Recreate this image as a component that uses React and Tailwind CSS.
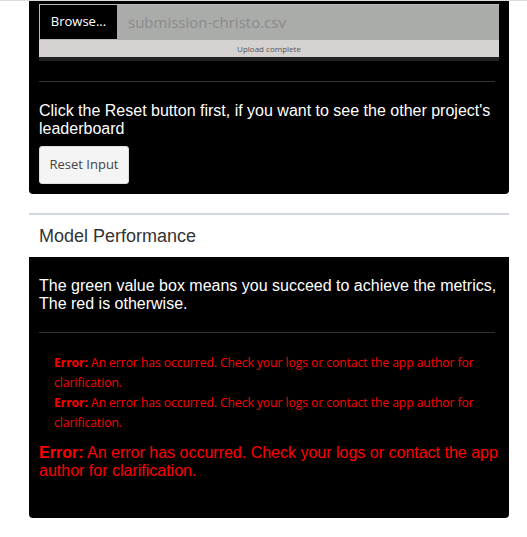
export default function App() {
  return (
    <div className="w-[527px] h-[537px] bg-white border-t border-[#dcdcdc] overflow-hidden">
      <div className="ml-[29px] w-[480px] bg-black rounded-b-[4px] px-[10px] pt-[3px] pb-[10px]">
        <div className="flex h-[36px]">
          <div className="w-[78px] h-full border border-[#bbb] border-r-0 flex items-center justify-center text-white text-[13px] font-['Open_Sans',sans-serif]">
            Browse...
          </div>
          <div className="flex-1 h-full bg-[#aaacaa] border-t border-[#bbb] flex items-center pl-[11px] text-[#8a8a8a] text-[15px] font-['Open_Sans',sans-serif]">
            submission-christo.csv
          </div>
        </div>
        <div className="h-[17px] bg-[#d5d2d1] flex items-center justify-center text-[8px] text-[#555] font-['Open_Sans',sans-serif]">
          Upload complete
        </div>
        <div className="h-[4px] bg-[#222]"></div>
        <div className="mt-[20px] w-[456px] border-t border-[#333]"></div>
        <p className="mt-[20px] text-white text-[16px] leading-[18px] pr-[6px] font-['Liberation_Sans',Arial,sans-serif]">
          Click the Reset button first, if you want to see the other project's leaderboard
        </p>
        <button className="mt-[8px] w-[90px] h-[38px] bg-[#f4f4f4] border border-[#ddd] rounded-[3px] text-[#444] text-[13px] font-['Open_Sans',sans-serif]">
          Reset Input
        </button>
      </div>

      <div className="ml-[29px] mt-[19px] w-[480px] border-t-[2px] border-[#d2d6de] rounded-b-[4px] overflow-hidden">
        <div className="h-[42px] bg-white flex items-center px-[10px] text-[18px] text-[#333] font-['Liberation_Sans',Arial,sans-serif]">
          Model Performance
        </div>
        <div className="bg-black px-[10px] pt-[20px] pb-[38px]">
          <p className="text-white text-[16px] leading-[18px] font-['Liberation_Sans',Arial,sans-serif]">
            The green value box means you succeed to achieve the metrics, The red is otherwise.
          </p>
          <div className="mt-[19px] w-[456px] border-t border-[#333]"></div>
          <div className="mt-[20px] pl-[15px] pr-[20px] text-[#ff0000] text-[12px] leading-[20px] font-['Open_Sans',sans-serif]">
            <div><b>Error:</b> An error has occurred. Check your logs or contact the app author for clarification.</div>
            <div><b>Error:</b> An error has occurred. Check your logs or contact the app author for clarification.</div>
          </div>
          <div className="mt-[11px] text-[#ff0000] text-[16px] leading-[18px] font-['Liberation_Sans',Arial,sans-serif]">
            <b>Error:</b> An error has occurred. Check your logs or contact the app author for clarification.
          </div>
        </div>
      </div>
    </div>
  );
}
